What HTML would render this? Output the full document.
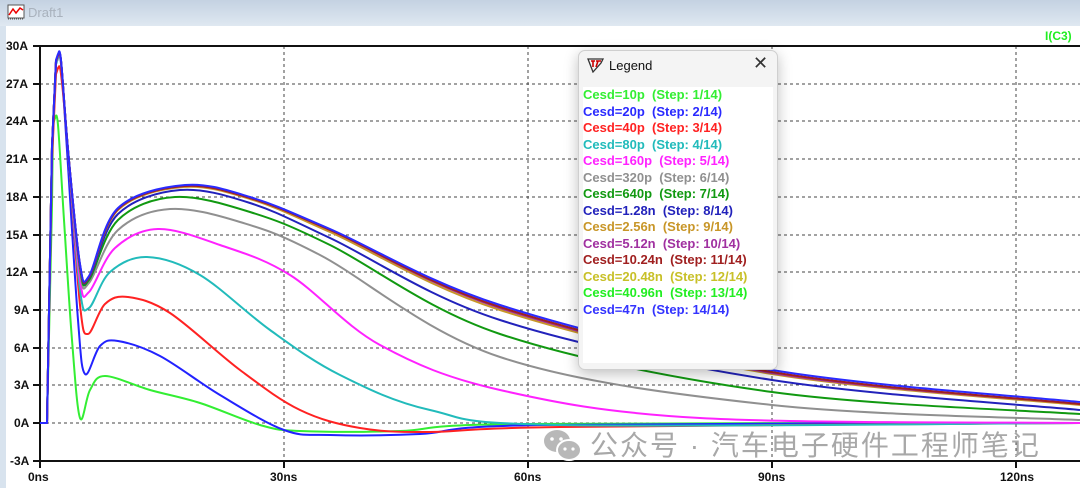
<!DOCTYPE html>
<html><head><meta charset="utf-8"><style>
body{margin:0;width:1080px;height:488px;overflow:hidden;background:#fff;font-family:"Liberation Sans",Arial,sans-serif;position:relative}
.tb{position:absolute;left:0;top:0;width:1080px;height:26px;background:linear-gradient(#c4d2e2,#dfe8f1);}
.tb span{position:absolute;left:28px;top:5px;font-size:13px;color:#a9b2bd}
.lb{position:absolute;left:0;top:26px;width:6px;height:462px;background:#d8e3ee}
.ax{position:absolute;font-weight:bold;font-size:12px;color:#111}
.leg{position:absolute;left:578px;top:50px;width:198px;height:318px;background:#f4f4f4;border:1px solid #cfcfcf;border-radius:7px;box-shadow:0 4px 14px rgba(0,0,0,.25)}
.leg .t{position:absolute;left:30px;top:7px;font-size:13px;color:#111}
.leg .x{position:absolute;left:174px;top:2px;font-size:18px;color:#333}
.leg .in{position:absolute;left:4px;top:36px;width:190px;height:276px;background:#fff}
.leg .in div{font-weight:bold;font-size:13px;height:16.5px;line-height:16.5px;padding-left:0px;white-space:pre}
.wm{position:absolute;left:590px;top:424px;font-family:"Liberation Sans","Noto Sans CJK SC",sans-serif;font-size:28px;color:#a8a8a8;letter-spacing:2px;white-space:nowrap}
</style></head><body>
<div class="tb"><svg style="position:absolute;left:7px;top:4px" width="18" height="16"><rect x="1" y="1" width="16" height="13" fill="#fff" stroke="#555"/><path d="M2 11 L6 5 L9 9 L13 4 L16 6" stroke="#e00" stroke-width="1.5" fill="none"/><path d="M1 15h16" stroke="#555" stroke-dasharray="1 1"/></svg><span>Draft1</span></div>
<div class="lb"></div>
<svg id="p" style="position:absolute;left:0;top:0" width="1080" height="488"></svg>
<div class="ax" style="left:6px;top:39px">30A</div>
<div class="ax" style="left:6px;top:77px">27A</div>
<div class="ax" style="left:6px;top:114px">24A</div>
<div class="ax" style="left:6px;top:152px">21A</div>
<div class="ax" style="left:6px;top:190px">18A</div>
<div class="ax" style="left:6px;top:228px">15A</div>
<div class="ax" style="left:6px;top:265px">12A</div>
<div class="ax" style="left:14px;top:303px">9A</div>
<div class="ax" style="left:14px;top:341px">6A</div>
<div class="ax" style="left:14px;top:378px">3A</div>
<div class="ax" style="left:14px;top:416px">0A</div>
<div class="ax" style="left:10px;top:454px">-3A</div>
<div class="ax" style="left:28px;top:470px">0ns</div>
<div class="ax" style="left:270px;top:470px">30ns</div>
<div class="ax" style="left:514px;top:470px">60ns</div>
<div class="ax" style="left:758px;top:470px">90ns</div>
<div class="ax" style="left:1000px;top:470px">120ns</div>
<div class="ax" style="left:1045px;top:29px;color:#22ee22">I(C3)</div>
<div class="wm">公众号 · 汽车电子硬件工程师笔记</div>
<svg style="position:absolute;left:542px;top:428px" width="42" height="36"><ellipse cx="15" cy="13" rx="13" ry="11" fill="#b8b8b8"/><ellipse cx="27" cy="22" rx="12" ry="10" fill="#b8b8b8" stroke="#fff" stroke-width="2"/><circle cx="10" cy="11" r="1.8" fill="#fff"/><circle cx="19" cy="11" r="1.8" fill="#fff"/><circle cx="23" cy="21" r="1.6" fill="#fff"/><circle cx="31" cy="21" r="1.6" fill="#fff"/></svg>
<div class="leg"><svg style="position:absolute;left:8px;top:6px" width="18" height="16"><path d="M1 2h15l-2 4-8 9z" fill="none" stroke="#333" stroke-width="1.3"/><path d="M4 4h4M6 4v6M9 4h5M11 4l-2 6" stroke="#c00" stroke-width="1.6"/></svg><div class="t">Legend</div><div class="x">✕</div>
<div class="in">
<div style="color:#33ee33">Cesd=10p  (Step: 1/14)</div>
<div style="color:#2a2aff">Cesd=20p  (Step: 2/14)</div>
<div style="color:#ff2222">Cesd=40p  (Step: 3/14)</div>
<div style="color:#22bbbb">Cesd=80p  (Step: 4/14)</div>
<div style="color:#ff22ff">Cesd=160p  (Step: 5/14)</div>
<div style="color:#909090">Cesd=320p  (Step: 6/14)</div>
<div style="color:#119911">Cesd=640p  (Step: 7/14)</div>
<div style="color:#2222bb">Cesd=1.28n  (Step: 8/14)</div>
<div style="color:#c89628">Cesd=2.56n  (Step: 9/14)</div>
<div style="color:#a030a0">Cesd=5.12n  (Step: 10/14)</div>
<div style="color:#a02020">Cesd=10.24n  (Step: 11/14)</div>
<div style="color:#c8c028">Cesd=20.48n  (Step: 12/14)</div>
<div style="color:#22ee22">Cesd=40.96n  (Step: 13/14)</div>
<div style="color:#3333ff">Cesd=47n  (Step: 14/14)</div>
</div></div>
<script>
var s='';
var ys=[84,121,159,197,235,272,310,348,385,423];
ys.forEach(function(y){s+='<path d="M40 '+y+'H1080" stroke="#444" stroke-dasharray="3 3"/>';});
[284,528,772,1016].forEach(function(x){s+='<path d="M'+x+' 46V461" stroke="#444" stroke-dasharray="3 3"/>';});
s+='<path d="M40 46H1080M40 46V461H1080" stroke="#111" stroke-width="2" fill="none"/>';
[46,84,121,159,197,235,272,310,348,385,423,461].forEach(function(y){s+='<path d="M33 '+y+'H40" stroke="#111" stroke-width="2"/>';});
[40,284,528,772,1016].forEach(function(x){s+='<path d="M'+x+' 461V468" stroke="#111" stroke-width="2"/>';});
function cr(p){var d='';for(var i=0;i<p.length-1;i++){var a=p[i-1]||p[i],b=p[i],c=p[i+1],e=p[i+2]||c;d+='C'+(b[0]+(c[0]-a[0])/6)+' '+(b[1]+(c[1]-a[1])/6)+' '+(c[0]-(e[0]-b[0])/6)+' '+(c[1]-(e[1]-b[1])/6)+' '+c[0]+' '+c[1];}return d;}
var C=[
['#33ee33',115,[[55,118],[58,125],[64,220],[72,340],[80,418],[90,390],[105,376],[150,390],[200,403],[260,425],[300,431],[400,431],[520,424],[1080,423]]],
['#2222ff',64,[[58,58],[61,62],[67,150],[78,320],[85,374],[100,346],[118,341],[160,356],[220,395],[284,430],[330,435],[420,434],[540,425],[1080,423]]],
['#ff2222',70,[[58,68],[61,74],[68,150],[80,305],[88,334],[105,304],[128,297],[170,313],[240,370],[300,410],[360,428],[430,432],[560,427],[1080,423]]],
['#22bbbb',60,[[58,58],[61,64],[68,150],[80,290],[89,308],[110,272],[147,257],[200,275],[270,330],[340,375],[430,410],[560,425],[1080,423]]],
['#ff22ff',58,[[58,56],[61,62],[68,150],[80,280],[89,292],[115,248],[158,229],[220,245],[290,275],[380,345],[500,390],[700,418],[1080,423]]],
['#909090',57,[[58,55],[61,61],[68,150],[80,272],[89,283],[118,230],[170,209],[240,222],[320,255],[500,357],[772,405],[1080,420]]],
['#119911',57,[[58,55],[61,61],[68,150],[80,268],[89,280],[118,220],[175,197],[250,212],[330,245],[500,334],[772,392],[1080,414]]],
['#2222bb',57,[[58,55],[61,61],[68,150],[80,266],[89,278],[118,214],[180,190],[250,203],[330,238],[500,320],[772,380],[1080,410]]],
['#c89628',57,[[58,55],[61,61],[68,150],[80,265],[89,277],[118,210],[183,187],[250,199],[330,232],[500,310],[772,374],[1080,405]]],
['#a030a0',57,[[58,55],[61,61],[68,150],[80,265],[89,277],[118,209],[184,186],[250,198],[330,230],[500,308],[772,373],[1080,404]]],
['#a02020',57,[[58,55],[61,61],[68,150],[80,265],[89,277],[118,209],[184,186],[250,198],[330,230],[500,307],[772,372],[1080,404]]],
['#2a2aff',56,[[58,54],[61,60],[68,150],[80,264],[89,276],[118,208],[185,185],[250,197],[330,229],[500,305],[772,370],[1080,402]]]
];
C.forEach(function(c){var p=c[2];var d='M40 423H47L52 '+(c[1]+90)+'L'+(p[0][0]-2)+' '+(p[0][1]+6)+'L'+p[0][0]+' '+p[0][1]+cr(p);s+='<path d="'+d+'" stroke="'+c[0]+'" stroke-width="2" fill="none" stroke-linejoin="round"/>';});
document.getElementById('p').innerHTML=s;
</script>
</body></html>
